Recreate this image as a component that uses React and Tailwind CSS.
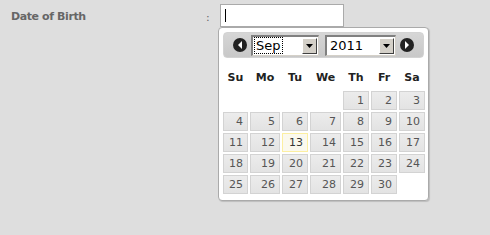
import React from 'react';

const weeks = [
  [null, null, null, null, 1, 2, 3],
  [4, 5, 6, 7, 8, 9, 10],
  [11, 12, 13, 14, 15, 16, 17],
  [18, 19, 20, 21, 22, 23, 24],
  [25, 26, 27, 28, 29, 30, null],
];

const dayNames = ['Su', 'Mo', 'Tu', 'We', 'Th', 'Fr', 'Sa'];

const NavButton = ({ dir }) => (
  <div className="w-[14px] h-[14px] rounded-full bg-[#222] flex items-center justify-center">
    <svg width="6" height="8" viewBox="0 0 6 8">
      {dir === 'prev' ? (
        <polygon points="5,0 5,8 1,4" fill="#fff" />
      ) : (
        <polygon points="1,0 1,8 5,4" fill="#fff" />
      )}
    </svg>
  </div>
);

const FakeSelect = ({ value, width, focused }) => (
  <div
    className="h-[21px] bg-white flex items-stretch border-t-2 border-l-2 border-b border-r border-t-[#808080] border-l-[#808080] border-b-[#d4d0c8] border-r-[#d4d0c8]"
    style={{ width }}
  >
    <div className="flex-1 flex items-center pl-[2px]">
      <span className={`px-[1px] leading-[15px] text-[13px] text-black ${focused ? 'outline outline-1 outline-dotted outline-black' : ''}`}>
        {value}
      </span>
    </div>
    <div className="w-[15px] my-[1px] mr-[1px] bg-[#d4d0c8] border border-t-white border-l-white border-r-[#404040] border-b-[#404040] flex items-center justify-center">
      <svg width="7" height="4" viewBox="0 0 7 4">
        <polygon points="0,0 7,0 3.5,4" fill="#000" />
      </svg>
    </div>
  </div>
);

export default function App() {
  return (
    <div className="relative w-[490px] h-[235px] bg-[#dedede] font-['DejaVu_Sans',Verdana,sans-serif] overflow-hidden">
      <div className="flex items-start pt-[4px]">
        <div className="w-[206px] pl-[11px] pt-[5px] text-[11px] font-bold tracking-[-0.4px] text-[#666]">Date of Birth</div>
        <div className="w-[14px] pt-[6px] text-[11px] text-[#666]">:</div>
        <div className="w-[124px] h-[23px] bg-white border border-[#aaa] flex items-center pl-[4px]">
          <div className="w-[1px] h-[13px] bg-black" />
        </div>
      </div>

      {/* datepicker popup */}
      <div className="absolute left-[218px] top-[27px] w-[211px] h-[174px] bg-white border border-[#aaa] rounded-[4px] p-[4px] shadow-[1px_1px_1px_rgba(0,0,0,0.15)]">
        <div className="h-[26px] rounded-[4px] border border-[#d3d3d3] bg-gradient-to-b from-[#d6d6d6] to-[#c8c8c8] flex items-center px-[9px]">
          <NavButton dir="prev" />
          <div className="ml-[4px] flex gap-[6px]">
            <FakeSelect value="Sep" width={68} focused />
            <FakeSelect value="2011" width={71} />
          </div>
          <div className="ml-auto">
            <NavButton dir="next" />
          </div>
        </div>

        <div className="grid grid-cols-[25px_30px_26px_31px_26px_26px_26px] gap-x-[2px] mt-[10px] text-[11px] font-bold text-[#222] text-center h-[20px] items-center">
          {dayNames.map((d) => (
            <div key={d}>{d}</div>
          ))}
        </div>

        <div className="grid grid-cols-[25px_30px_26px_31px_26px_26px_26px] gap-[2px] mt-[3px]">
          {weeks.flat().map((n, i) =>
            n === null ? (
              <div key={i} className="h-[19px]" />
            ) : n === 13 ? (
              <div
                key={i}
                className="h-[19px] border border-[#fcefa1] bg-[#fbf9ee] text-[#363636] text-[11px] text-right pr-[4px] leading-[17px]"
              >
                {n}
              </div>
            ) : (
              <div
                key={i}
                className="h-[19px] border border-[#d3d3d3] bg-gradient-to-b from-[#ececec] to-[#e3e3e3] text-[#555] text-[11px] text-right pr-[4px] leading-[17px]"
              >
                {n}
              </div>
            )
          )}
        </div>
      </div>
    </div>
  );
}
